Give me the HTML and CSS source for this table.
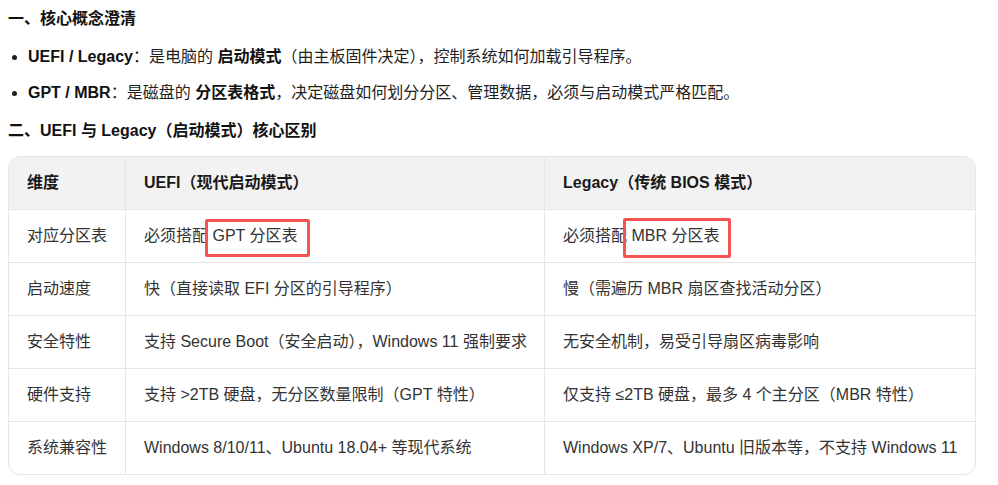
FILE: index.html
```html
<!DOCTYPE html>
<html lang="zh-CN">
<head>
<meta charset="utf-8">
<title>UEFI vs Legacy</title>
<link rel="stylesheet" href="styles.css">
</head>
<body>
<h3 class="h first">一、核心概念澄清</h3>
<ul class="list">
  <li><strong>UEFI / Legacy</strong>：是电脑的 <strong>启动模式</strong>（由主板固件决定），控制系统如何加载引导程序。</li>
  <li><strong>GPT / MBR</strong>：是磁盘的 <strong>分区表格式</strong>，决定磁盘如何划分分区、管理数据，必须与启动模式严格匹配。</li>
</ul>
<h3 class="h second">二、UEFI 与 Legacy（启动模式）核心区别</h3>
<table class="cmp">
  <colgroup>
    <col class="c1">
    <col class="c2">
    <col class="c3">
  </colgroup>
  <thead>
    <tr><th>维度</th><th>UEFI（现代启动模式）</th><th>Legacy（传统 BIOS 模式）</th></tr>
  </thead>
  <tbody>
    <tr><td>对应分区表</td><td>必须搭配 <span class="hl hl-a">GPT 分区表</span></td><td>必须搭配 <span class="hl hl-b">MBR 分区表</span></td></tr>
    <tr><td>启动速度</td><td>快（直接读取 EFI 分区的引导程序）</td><td>慢（需遍历 MBR 扇区查找活动分区）</td></tr>
    <tr><td>安全特性</td><td>支持 Secure Boot（安全启动），Windows 11 强制要求</td><td>无安全机制，易受引导扇区病毒影响</td></tr>
    <tr><td>硬件支持</td><td>支持 &gt;2TB 硬盘，无分区数量限制（GPT 特性）</td><td>仅支持 ≤2TB 硬盘，最多 4 个主分区（MBR 特性）</td></tr>
    <tr><td>系统兼容性</td><td>Windows 8/10/11、Ubuntu 18.04+ 等现代系统</td><td>Windows XP/7、Ubuntu 旧版本等，不支持 Windows 11</td></tr>
  </tbody>
</table>
</body>
</html>
```
FILE: styles.css
```css
html, body {
  background: #ffffff;
}
body {
  margin: 8px;
  font-family: "Liberation Sans", "Noto Sans CJK SC", sans-serif;
  font-size: 16px;
  color: #1f1f1f;
}
.h {
  font-size: 16px;
  font-weight: 700;
  line-height: 22px;
  color: #111111;
  margin: 0;
}
.second {
  margin-top: 15px;
}
.list {
  margin: 15px 0 0 0;
  padding-left: 20px;
}
.list li {
  line-height: 24px;
  margin-bottom: 12px;
}
.list li:last-child {
  margin-bottom: 0;
}
.list strong {
  font-weight: 700;
  color: #111111;
}
.cmp {
  margin-top: 14px;
  width: 968px;
  border-collapse: separate;
  border-spacing: 0;
  border: 1px solid #e6e6e6;
  border-radius: 12px;
  overflow: hidden;
  table-layout: fixed;
}
.c1 { width: 117px; }
.c2 { width: 419px; }
.cmp th, .cmp td {
  text-align: left;
  padding: 14px 18px;
  line-height: 24px;
  border-right: 1px solid #e6e6e6;
  border-bottom: 1px solid #e6e6e6;
  white-space: nowrap;
}
.cmp th:last-child, .cmp td:last-child {
  border-right: none;
}
.cmp tbody tr:last-child td {
  border-bottom: none;
}
.cmp th {
  background: #f2f2f2;
  font-weight: 700;
  color: #1a1a1a;
}
.cmp td {
  color: #333333;
}
.hl {
  position: relative;
  display: inline-block;
  line-height: 24px;
}
.hl::after {
  content: "";
  position: absolute;
  border: 3px solid #f45454;
  border-radius: 2px;
}
.hl-a::after {
  left: -7px;
  right: -12px;
  top: -5px;
  bottom: -9px;
}
.hl-b::after {
  left: -8px;
  right: -12px;
  top: -6px;
  bottom: -10px;
}
```
